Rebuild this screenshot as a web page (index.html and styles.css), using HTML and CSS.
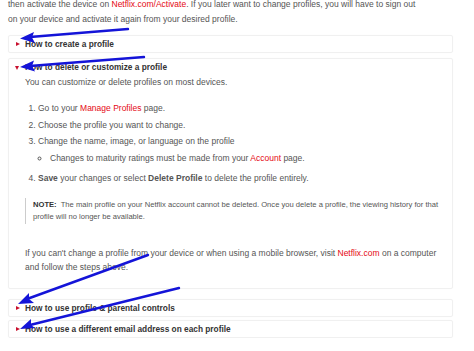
FILE: index.html
```html
<!DOCTYPE html>
<html>
<head>
    <title>Profiles</title>
    <link rel="stylesheet" href="styles.css">
</head>
<body>

<div class="page">
    <p class="intro">then activate the device on <a href="#">Netflix.com/Activate</a>. If you later want to change profiles, you will have to sign out on your device and activate it again from your desired profile.</p>

    <div class="acc">
        <div class="acc-head"><span class="tri"></span>How to create a profile</div>
    </div>

    <div class="acc open">
        <div class="acc-head"><span class="tri down"></span>How to delete or customize a profile</div>
        <div class="acc-body">
            <p>You can customize or delete profiles on most devices.</p>
            <ol>
                <li>Go to your <a href="#">Manage Profiles</a> page.</li>
                <li>Choose the profile you want to change.</li>
                <li>Change the name, image, or language on the profile
                    <ul>
                        <li>Changes to maturity ratings must be made from your <a href="#">Account</a> page.</li>
                    </ul>
                </li>
                <li><b>Save</b> your changes or select <b>Delete Profile</b> to delete the profile entirely.</li>
            </ol>
            <div class="note"><b>NOTE:</b>&nbsp; The main profile on your Netflix account cannot be deleted. Once you delete a profile, the viewing history for that profile will no longer be available.</div>
            <p class="last">If you can't change a profile from your device or when using a mobile browser, visit <a href="#">Netflix.com</a> on a computer and follow the steps above.</p>
        </div>
    </div>

    <div class="acc first-after">
        <div class="acc-head"><span class="tri"></span>How to use profile &amp; parental controls</div>
    </div>
    <div class="acc tight">
        <div class="acc-head"><span class="tri"></span>How to use a different email address on each profile</div>
    </div>
</div>

<svg class="marks" width="474" height="351" viewBox="0 0 474 351">
    <g stroke="#1414d8" stroke-width="2.4" fill="none" stroke-linecap="round">
        <line x1="128" y1="29" x2="30" y2="37"/>
        <line x1="144" y1="57" x2="30" y2="66"/>
        <line x1="148" y1="255" x2="27" y2="299"/>
        <line x1="179" y1="288" x2="30" y2="325"/>
    </g>
    <g fill="#1414d8">
        <path d="M20 38.5 L34 32 L32 37.5 L35 43 Z"/>
        <path d="M20 67 L34 60.5 L32 66 L35 71.5 Z"/>
        <path d="M18 304 L29 293 L29 299 L34 303 Z"/>
        <path d="M20 329 L31 319 L31 325 L35 328 Z"/>
    </g>
</svg>

</body>
</html>
```

FILE: styles.css
```css
body{ margin: 0;background: #FFF;font-family: "Liberation Sans", Arial, sans-serif;font-size: 8.5px;color: #555;}
a{ color: #e50914;text-decoration: none;}
.page{ padding: 0 21px 0 8px;}
.intro{ margin: -3px 28px 0 0;line-height: 15px;}

.acc{ margin-top: 5px;border: solid 1px #f0f0f0;border-radius: 2px;box-shadow: 0 0 1px #f4f4f4;}
.page .intro + .acc{ margin-top: 8px;}
.acc.first-after{ margin-top: 10px;}
.acc.tight{ margin-top: 3px;}
.acc-head{ position: relative;height: 16px;line-height: 16px;padding-left: 16px;font-weight: bold;font-size: 8.3px;color: #333;}
.tri{ position: absolute;left: 7px;top: 6px;width: 0;height: 0;border-left: 4px solid #c8102e;border-top: 2.5px solid transparent;border-bottom: 2.5px solid transparent;}
.tri.down{ left: 6px;top: 7px;border-top: 4px solid #c8102e;border-left: 2.5px solid transparent;border-right: 2.5px solid transparent;border-bottom: 0;}

.acc-body{ padding: 0 10px 14px 16px;}
.acc-body p{ margin: 0;line-height: 15px;}
.acc-body ol{ margin: 10px 0 0 0;padding-left: 13px;line-height: 16.5px;}
.acc-body ul{ margin: 0 0 4px 0;padding-left: 12px;list-style: circle;}
.note{ margin: 11px 0 0 0;padding: 1px 0 1px 7px;border-left: solid 1px #ccc;font-size: 7.6px;line-height: 12px;color: #555;}
.note b{ color: #333;}
.acc-body p.last{ margin-top: 22px;line-height: 14px;}

.marks{ position: absolute;left: 0;top: 0;pointer-events: none;}
```
